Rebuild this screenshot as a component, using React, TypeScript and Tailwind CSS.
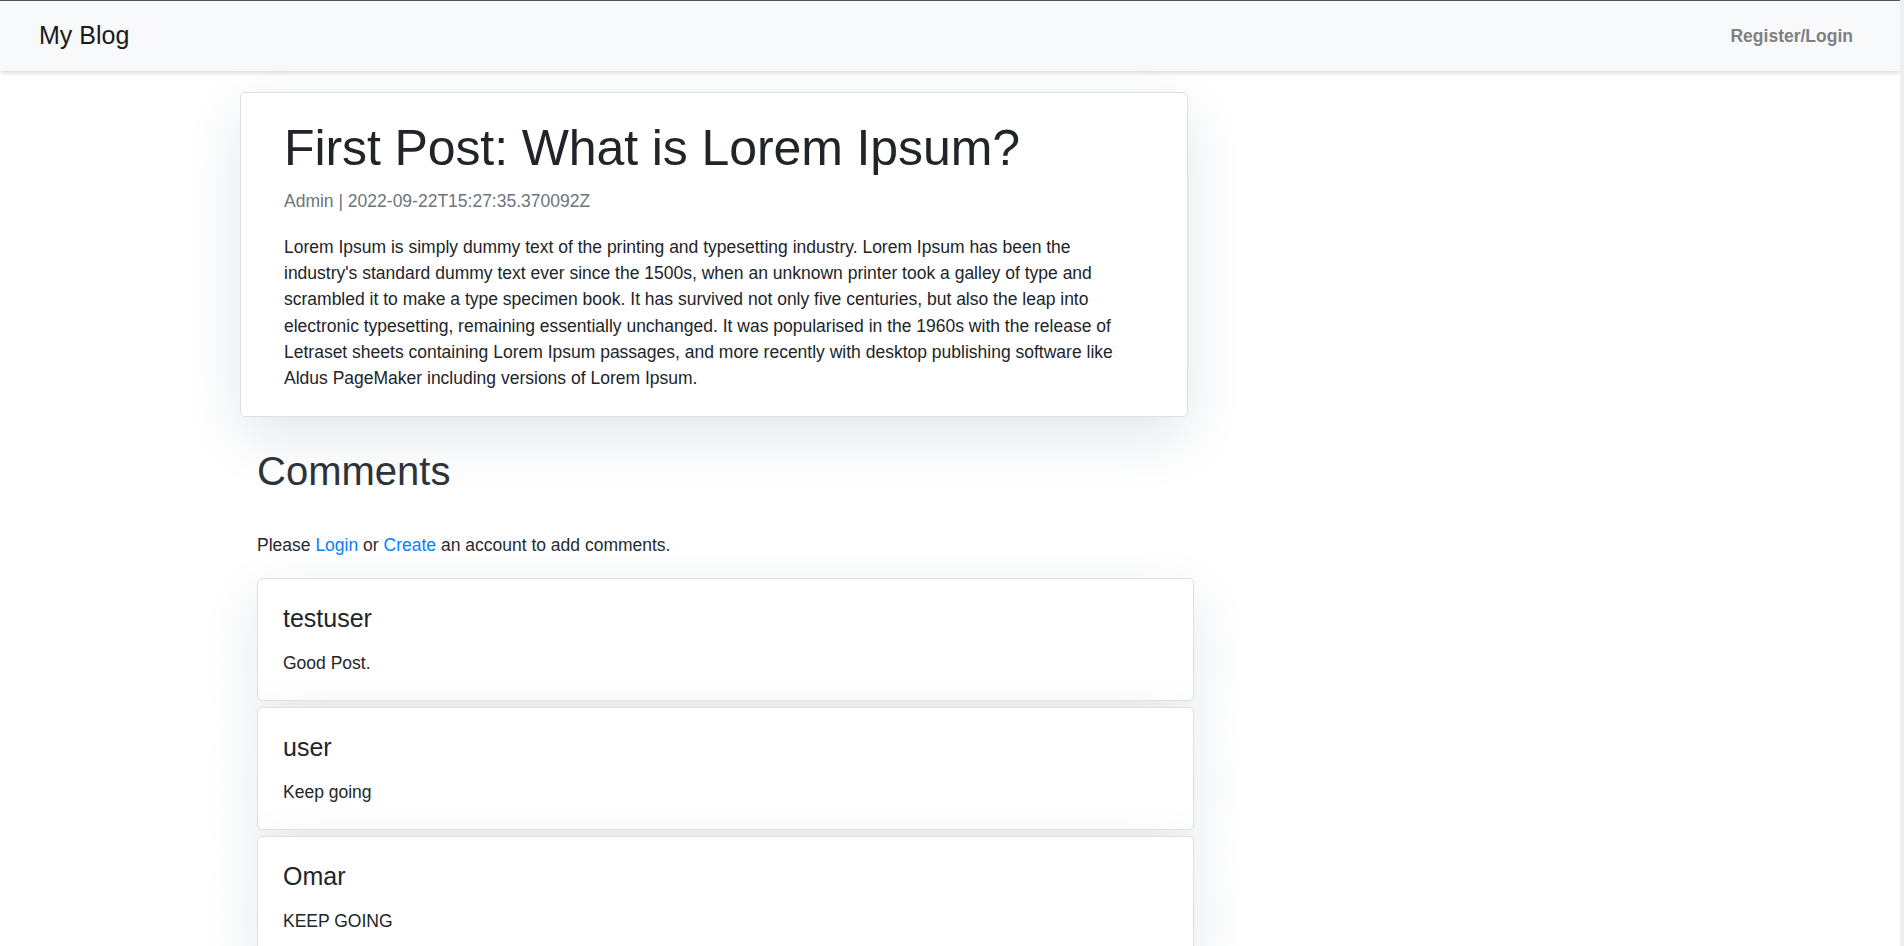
const comments = [
  { name: "testuser", body: "Good Post." },
  { name: "user", body: "Keep going" },
  { name: "Omar", body: "KEEP GOING" },
];

const App = () => {
  return (
    <div className="flex min-h-screen bg-white font-['Liberation_Sans',Arial,sans-serif] text-[#212529]">
      <div className="flex-1">
        <nav className="flex h-[71px] items-center justify-between border-t border-[#555] bg-[#f8f9fa] pl-[39px] pr-[47px] shadow-[0_2px_4px_rgba(0,0,0,0.15)]">
          <a className="pb-[2px] text-[25px] leading-[37px] text-[#1a1a1a]">My Blog</a>
          <a className="text-[17.5px] font-bold leading-[26px] text-[#808080]">Register/Login</a>
        </nav>

        <div className="mx-auto w-[1420px] pt-[21px]">
          <div className="w-[948px] rounded-[5px] border border-[#dfdfdf] bg-white pt-[25px] pr-[44px] pb-[25px] pl-[43px] shadow-[0_20px_60px_#E3E7EB]">
            <h1 className="mb-[9.5px] text-[50px] leading-[60px] tracking-[-0.1px]">
              First Post: What is Lorem Ipsum?
            </h1>
            <p className="text-[17.5px] leading-[26.25px] text-[#6c757d]">
              Admin | 2022-09-22T15:27:35.370092Z
            </p>
            <p className="mt-[20px] pr-[10px] text-[17.5px] leading-[26.25px]">
              Lorem Ipsum is simply dummy text of the printing and typesetting
              industry. Lorem Ipsum has been the industry's standard dummy text
              ever since the 1500s, when an unknown printer took a galley of type
              and scrambled it to make a type specimen book. It has survived not
              only five centuries, but also the leap into electronic typesetting,
              remaining essentially unchanged. It was popularised in the 1960s
              with the release of Letraset sheets containing Lorem Ipsum
              passages, and more recently with desktop publishing software like
              Aldus PageMaker including versions of Lorem Ipsum.
            </p>
          </div>

          <div className="mt-[30px] ml-[17px] w-[937px]">
            <h2 className="text-[40px] leading-[48px] text-[#2d3338]">Comments</h2>
            <p className="mt-[37px] text-[17.5px] leading-[26.25px]">
              Please <a className="text-[#007bff]">Login</a> or{" "}
              <a className="text-[#007bff]">Create</a> an account to add comments.
            </p>

            <div className="mt-[19px] flex flex-col gap-[6px]">
              {comments.map((c) => (
                <div
                  key={c.name}
                  className="rounded-[5px] border border-[#dfdfdf] bg-white px-[25px] pt-[24px] pb-[24px] shadow-[0_20px_60px_#E3E7EB]"
                >
                  <h5 className="mb-[17px] text-[25px] leading-[30px]">{c.name}</h5>
                  <p className="text-[17.5px] leading-[26.25px]">{c.body}</p>
                </div>
              ))}
            </div>
          </div>
        </div>
      </div>
      <div className="w-[4px] shrink-0 bg-[#efefef]" />
    </div>
  );
};

export default App;
